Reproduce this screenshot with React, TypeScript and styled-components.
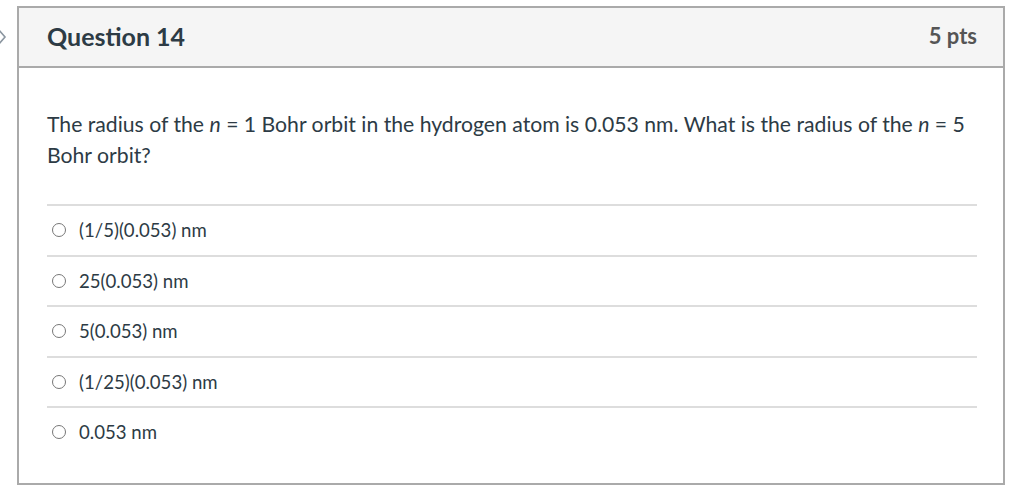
import styled, { createGlobalStyle } from 'styled-components'

const GlobalStyle = createGlobalStyle`
  html, body {
    margin: 0;
    padding: 0;
    background: #ffffff;
    font-family: Lato, "Open Sans", "Liberation Sans", sans-serif;
    color: #2d3b45;
  }
`

const answers = [
  '(1/5)(0.053) nm',
  '25(0.053) nm',
  '5(0.053) nm',
  '(1/25)(0.053) nm',
  '0.053 nm',
]

const App = () => {
  return (
    <>
      <GlobalStyle />
      <Page>
        <Chevron width="17" height="60" viewBox="0 0 17 60">
          <polyline points="-2,23 5,31 -2,39" fill="none" stroke="#8b96a0" strokeWidth="1.6" />
        </Chevron>
        <Card>
          <Header>
            <Title>Question 14</Title>
            <Points>5 pts</Points>
          </Header>
          <Body>
            <Prompt>
              The radius of the <i>n</i> = 1 Bohr orbit in the hydrogen atom is 0.053 nm. What is the radius of the <i>n</i> = 5 Bohr orbit?
            </Prompt>
            <AnswerList>
              {answers.map((a) => (
                <Answer key={a}>
                  <Radio />
                  <AnswerText>{a}</AnswerText>
                </Answer>
              ))}
            </AnswerList>
          </Body>
        </Card>
      </Page>
    </>
  )
}

const Page = styled.div`
  display: flex;
  align-items: flex-start;
  padding-top: 6px;
  width: 1026px;
  height: 502px;
  box-sizing: border-box;
`

const Chevron = styled.svg`
  flex: 0 0 17px;
  display: block;
`

const Card = styled.div`
  width: 988px;
  box-sizing: border-box;
  border: 2px solid #aaaaaa;
`

const Header = styled.div`
  display: flex;
  align-items: center;
  justify-content: space-between;
  height: 60px;
  box-sizing: border-box;
  padding: 0 26px 3px 28px;
  background: #f5f5f5;
  border-bottom: 2px solid #aaaaaa;
`

const Title = styled.h2`
  margin: 0;
  font-size: 25px;
  font-weight: 700;
  color: #2d3b45;
`

const Points = styled.div`
  font-size: 22px;
  font-weight: 700;
  color: #555555;
`

const Body = styled.div`
  padding: 41px 26px 26px 28px;
`

const Prompt = styled.p`
  margin: 0 0 34px 0;
  font-size: 21.2px;
  line-height: 30.5px;
  color: #2d3b45;

  i {
    font-style: italic;
  }
`

const AnswerList = styled.div`
  display: flex;
  flex-direction: column;
`

const Answer = styled.label`
  display: flex;
  align-items: center;
  gap: 13px;
  height: 48.5px;
  padding-left: 5px;
  border-top: 2px solid #dddddd;
`

const Radio = styled.span`
  flex: 0 0 auto;
  width: 12px;
  height: 12px;
  border: 1px solid #777777;
  border-radius: 50%;
  background: #ffffff;
`

const AnswerText = styled.span`
  font-size: 18.6px;
  color: #2d3b45;
`

export default App
